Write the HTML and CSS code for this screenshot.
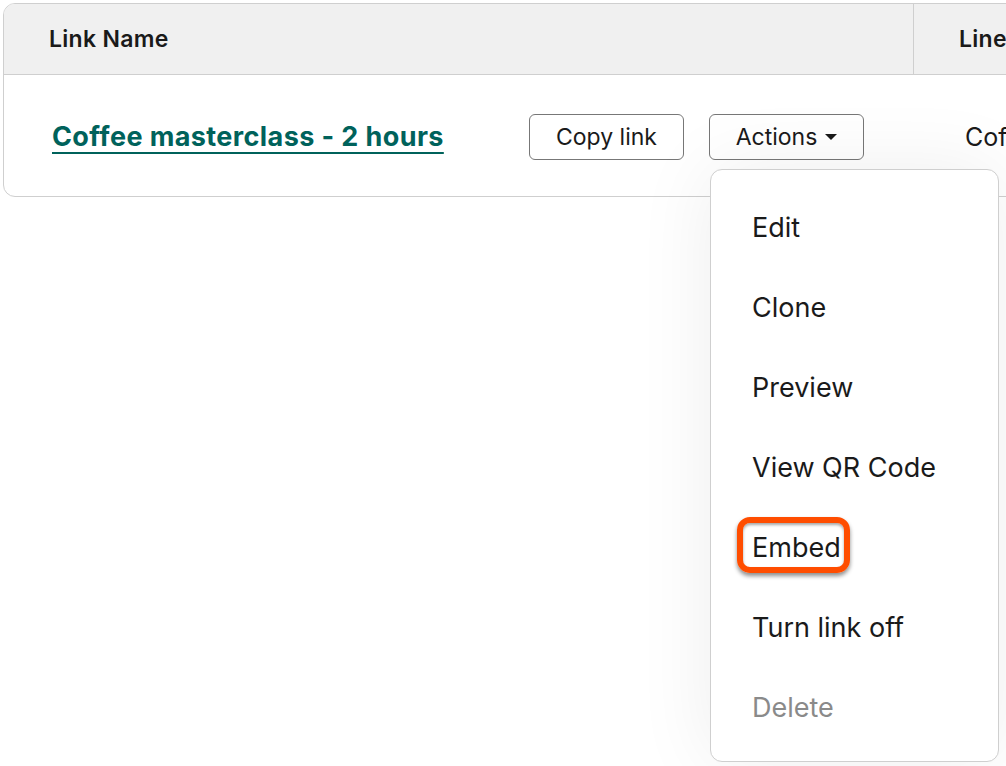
FILE: index.html
```html
<!DOCTYPE html>
<html lang="en">
<head>
  <meta charset="UTF-8">
  <title>Links</title>
  <link rel="stylesheet" href="styles.css">
</head>
<body>

  <div class="table">
    <div class="head">
      <div class="th th-name">Link Name</div>
      <div class="th th-line">Line</div>
    </div>
    <div class="row">
      <div class="td td-name">
        <a href="#" class="link-name">Coffee masterclass - 2 hours</a>
        <div class="buttons">
          <button class="btn">Copy link</button>
          <button class="btn">Actions <span class="caret"></span></button>
        </div>
      </div>
      <div class="td td-line">Coffee masterclass</div>
    </div>
  </div>

  <!-- dropdown opened from Actions -->
  <ul class="menu">
    <li>Edit</li>
    <li>Clone</li>
    <li>Preview</li>
    <li>View QR Code</li>
    <li><span class="highlight">Embed</span></li>
    <li>Turn link off</li>
    <li class="disabled">Delete</li>
  </ul>

</body>
</html>
```

FILE: styles.css
```css
body {
  margin: 0;
  background: #fff;
  color: #1a1a1a;
  font-family: Inter, "Open Sans", sans-serif;
  overflow: hidden;
  width: 1006px;
  height: 766px;
}

.table {
  margin: 3px 0 0 3px;
  width: 1200px;
  border: 1.5px solid #cfcfcf;
  border-radius: 12px;
  overflow: hidden;
}

.head {
  display: flex;
  height: 70px;
  background: #f0f0f0;
  border-bottom: 1.5px solid #cfcfcf;
}

.th {
  display: flex;
  align-items: center;
  font-weight: 600;
  font-size: 23px;
  letter-spacing: 0.3px;
}

.th-name {
  width: 864px;
  padding-left: 45px;
  border-right: 1.5px solid #cfcfcf;
}

.th-line {
  padding-left: 45px;
}

.row {
  display: flex;
  height: 121px;
  padding-top: 2px;
  box-sizing: border-box;
}

.td {
  display: flex;
  align-items: center;
}

.td-name {
  width: 862px;
  padding-left: 48px;
  justify-content: space-between;
}

.td-line {
  padding-left: 51px;
  font-size: 25px;
}

.link-name {
  color: #00625b;
  font-weight: bold;
  font-size: 27px;
  letter-spacing: 0.4px;
  text-decoration: underline;
  text-decoration-thickness: 2px;
  text-underline-offset: 6px;
}

.buttons {
  display: flex;
  gap: 25px;
  margin-right: 50px;
}

.btn {
  height: 46px;
  width: 155px;
  font-family: inherit;
  font-size: 23px;
  color: #1a1a1a;
  background: #fff;
  border: 1.5px solid #777;
  border-radius: 6px;
  display: flex;
  align-items: center;
  justify-content: center;
  gap: 8px;
}

.caret {
  width: 0;
  height: 0;
  border-left: 6px solid transparent;
  border-right: 6px solid transparent;
  border-top: 6px solid #1a1a1a;
}

.menu {
  position: absolute;
  left: 710px;
  top: 169px;
  width: 289px;
  height: 593px;
  box-sizing: border-box;
  margin: 0;
  padding: 17px 0 0 0;
  list-style: none;
  background: #fff;
  border: 1.5px solid #cfcfcf;
  border-radius: 12px;
  box-shadow: 0 0 80px rgba(0, 0, 0, 0.07);
}

.menu li {
  height: 80px;
  display: flex;
  align-items: center;
  padding-left: 41px;
  font-size: 27px;
}

.menu li.disabled {
  color: #8a8a8a;
}

.highlight {
  position: relative;
}

.highlight::after {
  content: "";
  position: absolute;
  left: -15px;
  right: -9px;
  top: -14px;
  bottom: -9px;
  border: 6px solid #ff4d00;
  border-radius: 13px;
  box-shadow: 0 3px 4px rgba(0, 0, 0, 0.45), inset 0 2px 3px rgba(0, 0, 0, 0.35);
}
```
